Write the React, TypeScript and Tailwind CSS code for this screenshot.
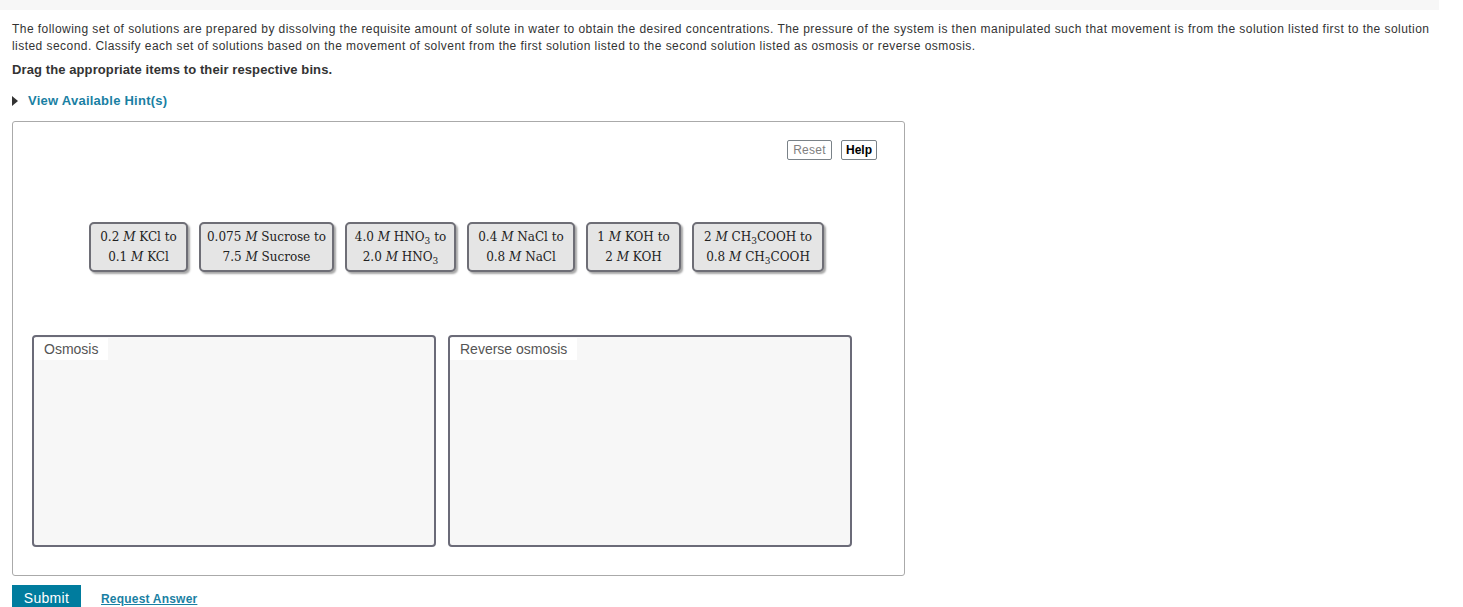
import React from "react";

function Chip({ w, top, bottom }: { w: string; top: React.ReactNode; bottom: React.ReactNode }) {
  return (
    <div
      className={`${w} h-[50px] flex flex-col items-center justify-center rounded-[5px] border-2 border-[#6e6e76] bg-[#e5e5e5] shadow-[2px_2px_2px_rgba(0,0,0,0.35)] text-[12px] leading-[20px] text-[#222] font-['DejaVu_Serif',serif]`}
    >
      <div className="whitespace-nowrap">{top}</div>
      <div className="whitespace-nowrap">{bottom}</div>
    </div>
  );
}

const M = () => <i>M</i>;
const Sub = ({ children }: { children: React.ReactNode }) => (
  <sub className="text-[9px] align-baseline relative top-[3px]">{children}</sub>
);

function Bin({ label }: { label: string }) {
  return (
    <div className="w-[404px] h-[212px] rounded-[4px] border-2 border-[#6b6b78] bg-[#f7f7f7]">
      <div className="inline-block bg-white pl-[10px] pr-[10px] h-[22px] leading-[22px] text-[14px] text-[#555]">
        {label}
      </div>
    </div>
  );
}

export default function App() {
  return (
    <div className="w-[1463px] h-[607px] overflow-hidden bg-white font-['Liberation_Sans',Arial,sans-serif] text-[#333]">
      <div className="w-[1439px] h-[10px] bg-[#f7f7f7]" />
      <div className="pl-[12px] pr-[20px] pt-[11px]">
        <p className="text-[12px] leading-[17px] tracking-[0.45px] w-[1428px]">
          The following set of solutions are prepared by dissolving the requisite amount of solute in water to obtain the desired concentrations. The pressure of the system is then manipulated such that movement is from the solution listed first to the solution listed second. Classify each set of solutions based on the movement of solvent from the first solution listed to the second solution listed as osmosis or reverse osmosis.
        </p>
        <p className="mt-[6px] text-[13px] leading-[17px] tracking-[0.1px] font-bold">Drag the appropriate items to their respective bins.</p>
        <div className="mt-[14px] flex items-center gap-[10px] text-[13px] leading-[17px] tracking-[0.25px] font-bold text-[#1a7fa3]">
          <svg width="6" height="10" viewBox="0 0 6 10" className="fill-[#333]">
            <path d="M0 0 L6 5 L0 10 Z" />
          </svg>
          <span>View Available Hint(s)</span>
        </div>

        <div className="mt-[12px] w-[893px] h-[455px] rounded-[3px] border border-[#aaaaaa] pt-[18px]">
          <div className="flex justify-end gap-[9px] pr-[27px]">
            <button className="h-[20px] px-[5px] rounded-[2px] border border-[#7a8288] text-[12px] tracking-[0.3px] text-[#808080] bg-white">Reset</button>
            <button className="h-[20px] px-[4px] rounded-[2px] border border-[#7a8288] text-[12px] font-bold text-black bg-white">Help</button>
          </div>

          <div className="mt-[62px] ml-[76px] flex gap-[11px]">
            <Chip w="w-[99px]" top={<>0.2 <M /> KCl to</>} bottom={<>0.1 <M /> KCl</>} />
            <Chip w="w-[135px]" top={<>0.075 <M /> Sucrose to</>} bottom={<>7.5 <M /> Sucrose</>} />
            <Chip w="w-[111px]" top={<>4.0 <M /> HNO<Sub>3</Sub> to</>} bottom={<>2.0 <M /> HNO<Sub>3</Sub></>} />
            <Chip w="w-[108px]" top={<>0.4 <M /> NaCl to</>} bottom={<>0.8 <M /> NaCl</>} />
            <Chip w="w-[95px]" top={<>1 <M /> KOH to</>} bottom={<>2 <M /> KOH</>} />
            <Chip w="w-[132px]" top={<>2 <M /> CH<Sub>3</Sub>COOH to</>} bottom={<>0.8 <M /> CH<Sub>3</Sub>COOH</>} />
          </div>

          <div className="mt-[63px] ml-[19px] flex gap-[12px]">
            <Bin label="Osmosis" />
            <Bin label="Reverse osmosis" />
          </div>
        </div>

        <div className="mt-[9px] flex items-start gap-[20px]">
          <button className="w-[69px] h-[22px] bg-[#007c9e] text-white text-[14px] leading-[16px] pt-[3px] tracking-[0.3px]">Submit</button>
          <a className="text-[12px] leading-[16px] pt-[6px] font-bold tracking-[0.2px] text-[#1a7fa3] underline">Request Answer</a>
        </div>
      </div>
    </div>
  );
}
